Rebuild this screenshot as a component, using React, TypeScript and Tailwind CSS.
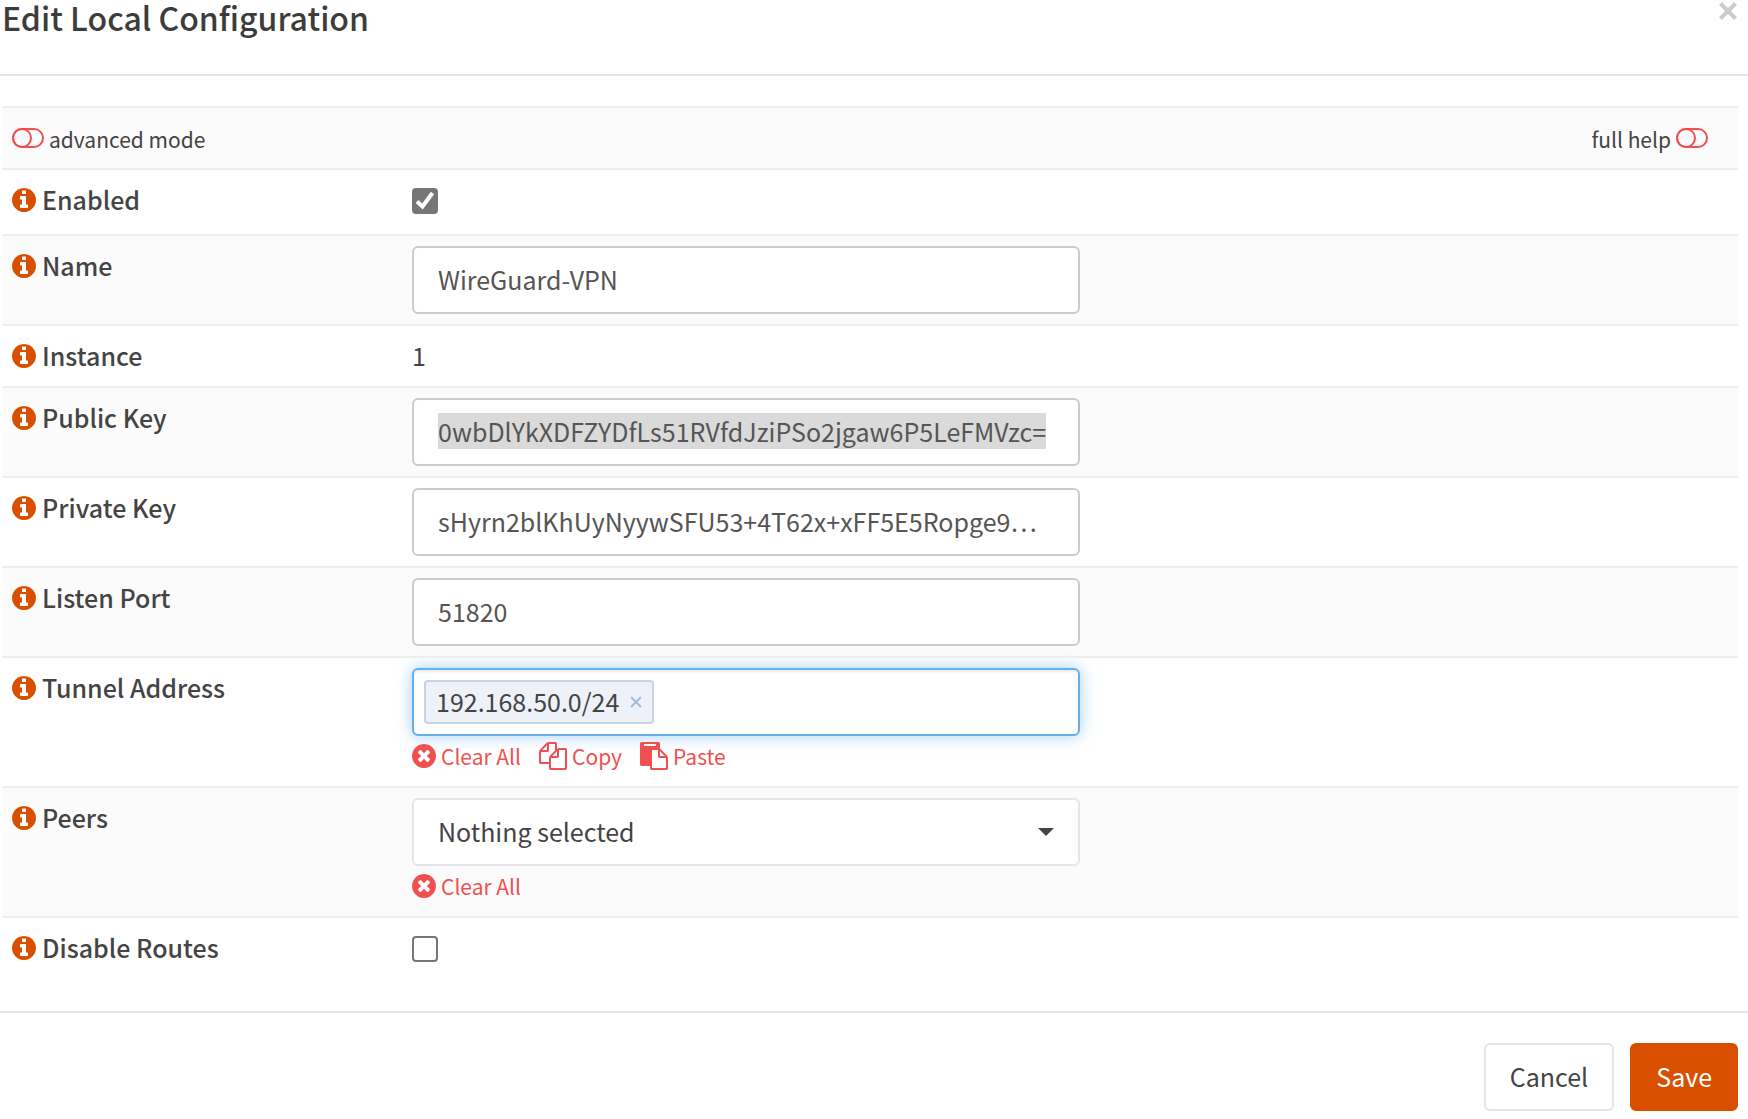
import { useEffect, useRef, useState } from "react";
import type { ReactNode } from "react";

const DISC =
  "q0 209-103 385.5t-279.5 279.5-385.5 103-385.5-103-279.5-279.5-103-385.5 103-385.5 279.5-279.5 385.5-103 385.5 103 279.5 279.5 103 385.5z";

const INFO =
  "M1152 1376v-160q0-14-9-23t-23-9h-96v-512q0-14-9-23t-23-9h-320q-14 0-23 9t-9 23v160q0 14 9 23t23 9h96v320h-96q-14 0-23 9t-9 23v160q0 14 9 23t23 9h448q14 0 23-9t9-23zm-128-896v-160q0-14-9-23t-23-9h-192q-14 0-23 9t-9 23v160q0 14 9 23t23 9h192q14 0 23-9t9-23zm640 416" +
  DISC;

const CLEAR =
  "M1277 1122q0-26-19-45l-181-181 181-181q19-19 19-45 0-27-19-46l-90-90q-19-19-46-19-26 0-45 19l-181 181-181-181q-19-19-45-19-27 0-46 19l-90 90q-19 19-19 46 0 26 19 45l181 181-181 181q-19 19-19 45 0 27 19 46l90 90q19 19 46 19 26 0 45-19l181-181 181 181q19 19 45 19 27 0 46-19l90-90q19-19 19-46zm387-226" +
  DISC;

const COPY =
  "M1696 384q40 0 68 28t28 68v1216q0 40-28 68t-68 28h-960q-40 0-68-28t-28-68v-288h-544q-40 0-68-28t-28-68v-672q0-40 20-88t48-76l408-408q28-28 76-48t88-20h416q40 0 68 28t28 68v328q68-40 128-40h416zm-544 213l-299 299h299v-299zm-640-384l-299 299h299v-299zm196 647l316-316v-416h-384v416q0 40-28 68t-68 28h-416v640h512v-256q0-40 20-88t48-76zm956 804v-1152h-384v416q0 40-28 68t-68 28h-416v640h896z";

const PASTE =
  "M768 1664h896v-640h-416q-40 0-68-28t-28-68v-416h-384v1152zm256-1440v-64q0-13-9.5-22.5t-22.5-9.5h-704q-13 0-22.5 9.5t-9.5 22.5v64q0 13 9.5 22.5t22.5 9.5h704q13 0 22.5-9.5t9.5-22.5zm256 672h299l-299-299v299zm512 128v672q0 40-28 68t-68 28h-960q-40 0-68-28t-28-68v-160h-544q-40 0-68-28t-28-68v-1344q0-40 28-68t68-28h1088q40 0 68 28t28 68v328q21 13 36 28l408 408q28 28 48 76t20 88z";

function DiscIcon({ d }: { d: string }) {
  return (
    <svg viewBox="128 128 1536 1536" className="size-6 shrink-0 fill-current" aria-hidden="true">
      <path d={d} />
    </svg>
  );
}

function FileIcon({ d }: { d: string }) {
  return (
    <svg viewBox="0 0 1792 1792" className="size-7 shrink-0 fill-current" aria-hidden="true">
      <path d={d} />
    </svg>
  );
}

function ToggleOff() {
  return (
    <svg viewBox="0 0 32 20" className="h-5 w-8 shrink-0 fill-none stroke-[#f05050] stroke-2" aria-hidden="true">
      <rect x="1" y="1" width="30" height="18" rx="9" />
      <circle cx="10" cy="10" r="9" />
    </svg>
  );
}

function Row({ label, htmlFor, children }: { label: string; htmlFor?: string; children: ReactNode }) {
  return (
    <tr className="border-t-2 border-[#eeeeee] align-top odd:bg-[#fbfbfb]">
      <th scope="row" className="p-2.5 text-left font-medium">
        <div className="flex h-10 items-center gap-1.5">
          <button type="button" aria-label={"Help for " + label} className="text-[#d94f00]">
            <DiscIcon d={INFO} />
          </button>
          <label htmlFor={htmlFor} className="pb-0.5">
            {label}
          </label>
        </div>
      </th>
      <td className="p-2.5">{children}</td>
    </tr>
  );
}

const FIELD =
  "block h-[68px] w-full max-w-[668px] rounded-md border-2 border-[#cccccc] bg-white px-6 pb-0.5 text-[#555555] outline-none text-ellipsis selection:bg-[#dadada] selection:text-[#555555]";

function Check({ id, initial }: { id: string; initial: boolean }) {
  const [on, setOn] = useState(initial);
  return (
    <div className="flex h-11 items-start pt-2">
      <span className="grid size-[26px]">
        <input
          id={id}
          type="checkbox"
          checked={on}
          onChange={(e) => setOn(e.target.checked)}
          className="peer col-start-1 row-start-1 size-full appearance-none rounded-[4px] border-2 border-[#767676] bg-white checked:bg-[#767676]"
        />
        <svg
          viewBox="0 0 26 26"
          className="pointer-events-none col-start-1 row-start-1 hidden fill-none stroke-white stroke-[4] peer-checked:block"
          aria-hidden="true"
        >
          <path d="M5 13.5L10.5 18.5L20.5 5" />
        </svg>
      </span>
    </div>
  );
}

function Action({ icon, children }: { icon: ReactNode; children: ReactNode }) {
  return (
    <a href="#" className="flex items-center gap-[5px]">
      {icon}
      <span>{children}</span>
    </a>
  );
}

export default function App() {
  const publicKey = useRef<HTMLInputElement>(null);
  useEffect(() => {
    publicKey.current?.focus();
    publicKey.current?.select();
  }, []);

  return (
    <form className="bg-white font-['Noto_Sans_CJK_SC',sans-serif] text-[25px] leading-10 text-[#444444]">
      <header className="flex items-start justify-between border-b-2 border-[#e5e5e5] pr-[11px] pb-10 pl-0.5">
        <h1 className="text-[32px] leading-[34px] font-medium text-[#3c3c3b]">Edit Local Configuration</h1>
        <button type="button" aria-label="Close" className="pt-0.5">
          <svg viewBox="0 0 18 18" className="size-[18px] fill-none stroke-[#cccccc] stroke-[4]" aria-hidden="true">
            <path d="M1.5 1.5L16.5 16.5M16.5 1.5L1.5 16.5" />
          </svg>
        </button>
      </header>

      <main className="pt-[30px] pr-2.5 pb-[29px] pl-0.5">
        <table className="w-full table-fixed border-collapse">
          <colgroup>
            <col className="w-[400px]" />
            <col />
          </colgroup>
          <tbody>
            <tr className="border-t-2 border-[#eeeeee] bg-[#fbfbfb] text-[21px]">
              <td colSpan={2} className="py-2.5 pr-[30px] pl-2.5">
                <div className="flex h-10 items-center justify-between">
                  <a href="#" className="flex items-center gap-[5px]">
                    <ToggleOff />
                    <span className="pt-0.5">advanced mode</span>
                  </a>
                  <a href="#" className="flex items-center gap-[5px]">
                    <span className="pt-0.5">full help</span>
                    <ToggleOff />
                  </a>
                </div>
              </td>
            </tr>
            <Row label="Enabled" htmlFor="enabled">
              <Check id="enabled" initial={true} />
            </Row>
            <Row label="Name" htmlFor="name">
              <input id="name" type="text" defaultValue="WireGuard-VPN" className={FIELD} />
            </Row>
            <Row label="Instance">
              <div className="flex h-10 items-center pb-0.5">1</div>
            </Row>
            <Row label="Public Key" htmlFor="pubkey">
              <input
                id="pubkey"
                ref={publicKey}
                type="text"
                defaultValue="0wbDlYkXDFZYDfLs51RVfdJziPSo2jgaw6P5LeFMVzc="
                className={FIELD}
              />
            </Row>
            <Row label="Private Key" htmlFor="privkey">
              <input
                id="privkey"
                type="text"
                defaultValue="sHyrn2blKhUyNyywSFU53+4T62x+xFF5E5Ropge9…"
                className={FIELD}
              />
            </Row>
            <Row label="Listen Port" htmlFor="port">
              <input id="port" type="text" defaultValue="51820" className={FIELD} />
            </Row>
            <Row label="Tunnel Address" htmlFor="tunnel">
              <div className="flex h-[68px] max-w-[668px] items-center gap-2 rounded-md border-2 border-[#66afe9] bg-white px-2.5 shadow-[inset_0_2px_2px_rgba(0,0,0,0.075),0_0_16px_rgba(102,175,233,0.6)]">
                <span className="flex h-11 items-center gap-[11px] rounded-[4px] border-2 border-[#cad3e4] bg-[#eef1f8] px-2.5">
                  <span className="pb-0.5">192.168.50.0/24</span>
                  <button type="button" aria-label="Remove 192.168.50.0/24">
                    <svg viewBox="0 0 12 12" className="size-3 fill-none stroke-[#a6bbe0] stroke-2" aria-hidden="true">
                      <path d="M1 1L11 11M11 1L1 11" />
                    </svg>
                  </button>
                </span>
                <input id="tunnel" type="text" className="h-10 min-w-0 flex-1 outline-none" />
              </div>
              <div className="flex h-10 items-center gap-[18px] text-[21px] text-[#f05050]">
                <Action icon={<DiscIcon d={CLEAR} />}>Clear All</Action>
                <Action icon={<FileIcon d={COPY} />}>Copy</Action>
                <Action icon={<FileIcon d={PASTE} />}>Paste</Action>
              </div>
            </Row>
            <Row label="Peers" htmlFor="peers">
              <div className="grid max-w-[668px] items-center">
                <select
                  id="peers"
                  className="col-start-1 row-start-1 h-[68px] w-full appearance-none rounded-md border-2 border-[#e5e5e5] bg-white px-6 pb-0.5 text-[#444444]"
                >
                  <option>Nothing selected</option>
                </select>
                <svg
                  viewBox="0 0 16 8"
                  className="pointer-events-none col-start-1 row-start-1 mr-[26px] h-2 w-4 justify-self-end fill-[#444444]"
                  aria-hidden="true"
                >
                  <path d="M0 0H16L8 8Z" />
                </svg>
              </div>
              <div className="flex h-10 items-center text-[21px] text-[#f05050]">
                <Action icon={<DiscIcon d={CLEAR} />}>Clear All</Action>
              </div>
            </Row>
            <Row label="Disable Routes" htmlFor="routes">
              <Check id="routes" initial={false} />
            </Row>
          </tbody>
        </table>
      </main>

      <footer className="flex justify-end gap-4 border-t-2 border-[#e5e5e5] pt-[30px] pr-2.5 pb-2">
        <button type="button" className="h-[68px] rounded-md border-2 border-[#e5e5e5] bg-white px-6 pb-0.5">
          Cancel
        </button>
        <button type="button" className="h-[68px] rounded-md border-2 border-[#d94f00] bg-[#d94f00] px-6 pb-0.5 text-white">
          Save
        </button>
      </footer>
    </form>
  );
}
